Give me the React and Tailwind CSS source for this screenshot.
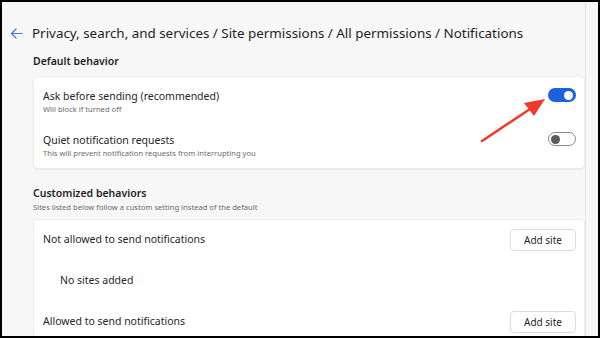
import React from 'react';

function Toggle({ on }) {
  return on ? (
    <div className="flex h-[14px] w-[28px] items-center justify-end rounded-full bg-[#1b62dc] px-[3px]">
      <div className="h-[9px] w-[9px] rounded-full bg-white" />
    </div>
  ) : (
    <div className="flex h-[14px] w-[28px] items-center justify-start rounded-full border border-[#8a8a8a] bg-white px-[2px]">
      <div className="h-[9px] w-[9px] rounded-full bg-[#5c5c5c]" />
    </div>
  );
}

function SettingRow({ title, sub, on }) {
  return (
    <div className="flex h-[44px] items-start justify-between pl-[9px] pr-[8px] pt-[12px]">
      <div className="flex flex-col">
        <span className="text-[10.5px] leading-[14px] text-[#262626]">{title}</span>
        <span className="text-[7.6px] leading-[12px] text-[#6b6b6b]">{sub}</span>
      </div>
      <div className="-mt-[1px]">
        <Toggle on={on} />
      </div>
    </div>
  );
}

function SiteRow({ title }) {
  return (
    <div className="flex h-[40px] items-center justify-between pl-[9px] pr-[8px]">
      <span className="text-[10.5px] text-[#262626]">{title}</span>
      <button className="h-[22px] w-[66px] rounded-[4px] border border-[#dcdcdc] bg-white text-[10px] text-[#1f1f1f]">
        Add site
      </button>
    </div>
  );
}

export default function App() {
  return (
    <div className="relative h-[338px] w-[600px] overflow-hidden border-2 border-black bg-[#f7f7f7] font-['Noto_Sans',sans-serif]">
      <div className="flex h-full">
        <div className="flex-1 pl-[8px]">
          {/* Header */}
          <div className="flex h-[44px] items-center gap-[9px] pt-[18px]">
            <svg width="13" height="13" viewBox="0 0 13 13" fill="none" stroke="#3b78e7" strokeWidth="1.2" strokeLinecap="round" strokeLinejoin="round">
              <path d="M12 6.5H1.5M6 2L1.5 6.5L6 11" />
            </svg>
            <h1 className="text-[13.4px] font-normal text-[#1f1f1f]">
              Privacy, search, and services / Site permissions / All permissions / Notifications
            </h1>
          </div>

          <div className="pl-[23px]">
            <h2 className="mt-[7px] text-[10.5px] leading-[16px] font-semibold text-[#1f1f1f]">Default behavior</h2>
            <div className="mt-[7px] h-[93px] rounded-[5px] border border-[#ececec] bg-white shadow-[0_1px_2px_rgba(0,0,0,0.06)]">
              <SettingRow title="Ask before sending (recommended)" sub="Will block if turned off" on />
              <SettingRow title="Quiet notification requests" sub="This will prevent notification requests from interrupting you" />
            </div>

            <h2 className="mt-[16px] text-[10.5px] leading-[16px] font-semibold text-[#1f1f1f]">Customized behaviors</h2>
            <p className="text-[7.6px] leading-[12px] text-[#6b6b6b]">Sites listed below follow a custom setting instead of the default</p>
            <div className="mt-[6px] rounded-[5px] border border-[#ececec] bg-white">
              <SiteRow title="Not allowed to send notifications" />
              <div className="flex h-[42px] items-center pl-[26px] text-[10.5px] text-[#262626]">No sites added</div>
              <SiteRow title="Allowed to send notifications" />
            </div>
          </div>
        </div>
        <div className="w-[13px] border-l border-[#e4e4e4] bg-[#f7f7f7]" />
      </div>

      {/* Annotation arrow */}
      <svg className="absolute left-0 top-0" width="600" height="338" viewBox="0 0 600 338">
        <line x1="480" y1="139" x2="531" y2="105" stroke="#f0392b" strokeWidth="2.5" strokeLinecap="round" />
        <polygon points="543,97 522,101 532,114" fill="#f0392b" />
      </svg>
    </div>
  );
}
